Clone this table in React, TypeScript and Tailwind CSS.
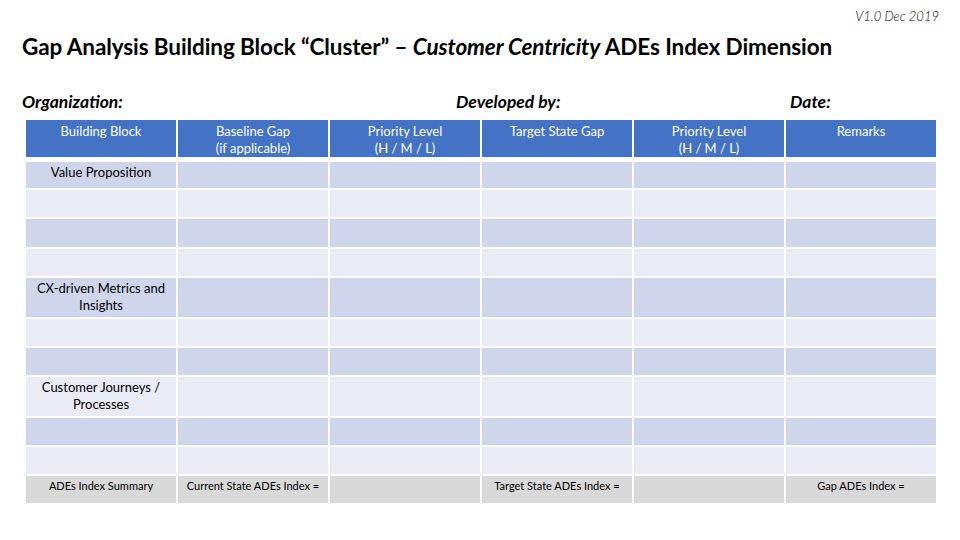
// Gap analysis worksheet: blue header, banded rows, grey summary row.

const HEAD = [
  ["Building Block"],
  ["Baseline Gap", "(if applicable)"],
  ["Priority Level", "(H / M / L)"],
  ["Target State Gap"],
  ["Priority Level", "(H / M / L)"],
  ["Remarks"],
];

// label in the first column, row height in px
const ROWS: { label?: string[]; h: string }[] = [
  { label: ["Value Proposition"], h: "h-[26px]" },
  { h: "h-[27px]" },
  { h: "h-[28px]" },
  { h: "h-[27px]" },
  { label: ["CX-driven Metrics and", "Insights"], h: "h-[39px]" },
  { h: "h-[27px]" },
  { h: "h-[27px]" },
  { label: ["Customer Journeys /", "Processes"], h: "h-[39px]" },
  { h: "h-[27px]" },
  { h: "h-[27px]" },
];

const SUMMARY = [
  "ADEs Index Summary",
  "Current State ADEs Index =",
  "",
  "Target State ADEs Index =",
  "",
  "Gap ADEs Index =",
];

export default function App() {
  return (
    <div
      className="w-[960px] h-[540px] bg-white text-black overflow-hidden"
      style={{ fontFamily: "Lato, 'Open Sans', sans-serif" }}
    >
      <div className="flex justify-end pr-[21px] pt-[9px] h-[24px] text-[13px] italic font-light leading-[14px]">
        V1.0 Dec 2019
      </div>

      <h1 className="pl-[22px] mt-[10px] text-[22.5px] font-bold leading-[26px] tracking-[-0.1px]">
        Gap Analysis Building Block “Cluster” – <i>Customer Centricity</i>{" "}
        ADEs Index Dimension
      </h1>

      <div className="flex mt-[32px] h-[20px] text-[17.5px] font-bold italic leading-[20px]">
        <div className="w-[456px] pl-[22px]">Organization:</div>
        <div className="w-[334px]">Developed by:</div>
        <div>Date:</div>
      </div>

      <div className="ml-[26px] mt-[8px] w-[910px]">
        <div className="grid grid-cols-[repeat(6,150px)] gap-x-[2px]">
          {HEAD.map((lines, i) => (
            <div
              key={i}
              className="h-[37px] bg-[#4472c4] text-white text-[13px] leading-[17px] text-center pt-[3px]"
            >
              {lines.map((l) => (
                <div key={l}>{l}</div>
              ))}
            </div>
          ))}
        </div>

        <div className="mt-[5px] grid grid-cols-[repeat(6,150px)] gap-[2px]">
          {ROWS.map((r, ri) =>
            Array.from({ length: 6 }).map((_, ci) => (
              <div
                key={ri + "-" + ci}
                className={
                  r.h +
                  " text-[13px] leading-[17px] text-center pt-[2px] " +
                  (ri % 2 === 0 ? "bg-[#cfd5ea]" : "bg-[#e9ebf5]")
                }
              >
                {ci === 0 &&
                  r.label?.map((l) => <div key={l}>{l}</div>)}
              </div>
            )),
          )}
          {SUMMARY.map((t, i) => (
            <div
              key={"s" + i}
              className="h-[27px] bg-[#d9d9d9] text-[11px] leading-[17px] text-center pt-[1px]"
            >
              {t}
            </div>
          ))}
        </div>
      </div>
    </div>
  );
}
